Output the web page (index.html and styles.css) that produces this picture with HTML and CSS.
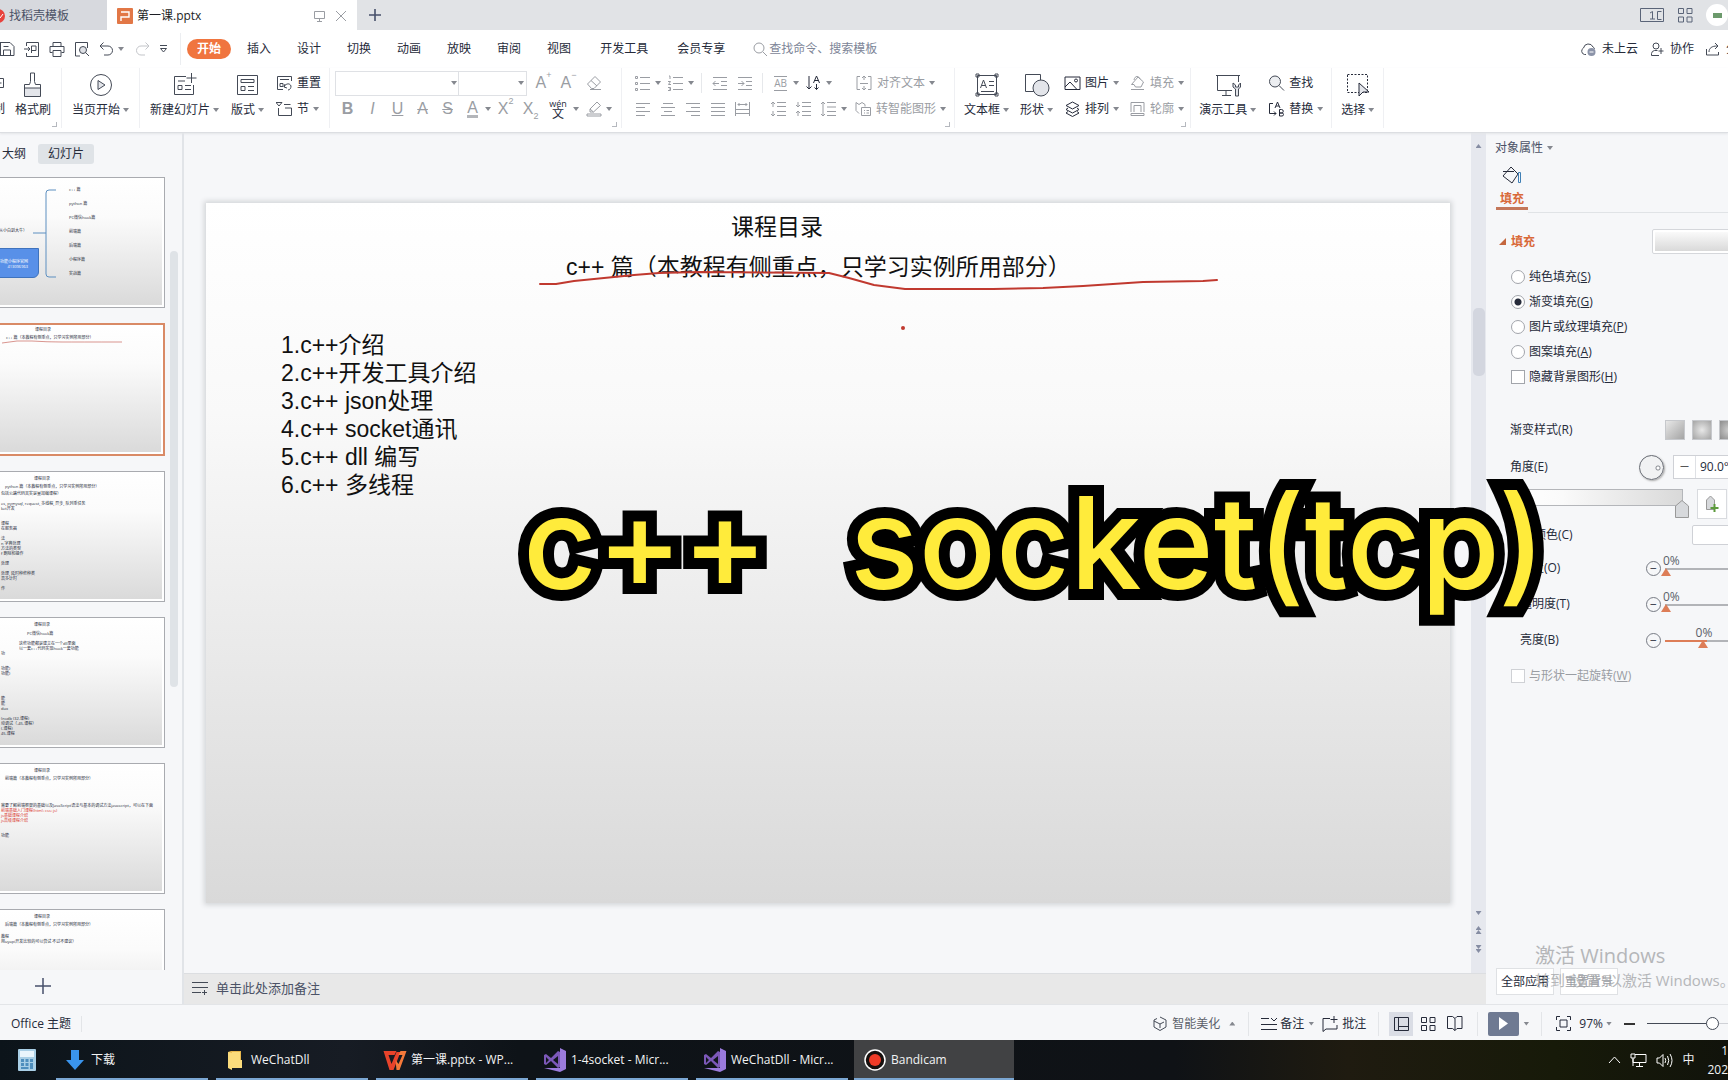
FILE: index.html
```
<!DOCTYPE html>
<html lang="zh-CN">
<head>
    <meta charset="UTF-8">
    <meta name="viewport" content="width=device-width, initial-scale=1.0">
    <title>第一课.pptx</title>
    <link rel="stylesheet" href="styles.css">
</head>
<body>
<div class="app">
    <!-- 标签栏 -->
    <header class="tab-bar">
        <div class="doc-tab first">
            <svg class="docer" width="5" height="14" viewBox="0 0 5 14"><circle cx="-2" cy="7" r="7" fill="#e8413c"/><path d="M0 9 L3 5" stroke="#fff" stroke-width="1"/></svg>
            <span>找稻壳模板</span>
        </div>
        <div class="doc-tab active">
            <svg width="16" height="16" viewBox="0 0 16 16"><rect width="16" height="16" rx="1" fill="#e27746"/><path d="M4 4h8v5H4v4" fill="none" stroke="#fff" stroke-width="1.4"/></svg>
            <span class="doc-name">第一课.pptx</span>
            <svg width="12" height="12" viewBox="0 0 12 12" class="ico gray"><path d="M.5 1.5h10v7H.5zM5.500 8.500v3M3 11.500h5"/></svg>
            <button class="plain" aria-label="关闭"><svg width="12" height="12" viewBox="0 0 12 12" class="ico gray"><path d="M1 1l10 10M11 1L1 11"/></svg></button>
        </div>
        <button class="plain new-tab" aria-label="新建"><svg width="12" height="12" viewBox="0 0 12 12"><path d="M6 0v12M0 6h12" stroke="#47506b" stroke-width="1.600"/></svg></button>
        <div class="window-tools">
            <svg width="25" height="15" viewBox="0 0 25 15" class="ico slate"><path d="M.5.5h23v13H.5zM21.500 3.500h-4v8h4M10 5l2.500-1.500V11M10 11h5"/></svg>
            <svg width="15" height="15" viewBox="0 0 15 15" class="ico slate"><path d="M.5.5h5v5h-5zM9 .5h5v5H9zM.5 9h5v5h-5zM9 9h5v5H9z"/></svg>
            <span class="avatar"><i></i></span>
        </div>
    </header>

    <!-- 菜单 -->
    <nav class="menu-bar">
        <div class="quick">
            <button class="plain" aria-label="保存"><svg width="15" height="16" viewBox="0 0 15 16" class="ico"><path d="M0 1.500h10l4 4v9H0M3.500 14.500V9h7v5.500M3.500 5.500h5M.5 2v12"/></svg></button>
            <button class="plain" aria-label="输出为PDF"><svg width="16" height="16" viewBox="0 0 16 16" class="ico"><path d="M2.500 5V1.500h12v14h-12V12M0 8h6M4 6l2 2-2 2M7.500 12V5H12v4.500H7"/></svg></button>
            <button class="plain" aria-label="打印"><svg width="16" height="16" viewBox="0 0 16 16" class="ico"><path d="M4 5V1.500h8V5M3.500 11.500H1V5.500h14v6h-2.500M4 9.500h8v6H4z"/></svg></button>
            <button class="plain" aria-label="打印预览"><svg width="16" height="16" viewBox="0 0 16 16" class="ico"><path d="M6 15H1.500V1.500h12V7"/><circle cx="9" cy="9" r="3.500" fill="#dfe1e6"/><path d="M11.500 11.500L15 15"/></svg></button>
            <button class="plain" aria-label="撤销"><svg width="14" height="16" viewBox="0 0 14 16" class="ico"><path d="M4.500 1.500L1 5l3.500 3.500M1 5h8a4 4 0 0 1 0 9H5"/></svg></button>
            <i class="caret"></i>
            <button class="plain" aria-label="恢复"><svg width="14" height="16" viewBox="0 0 14 16" class="ico light"><path d="M9.500 1.500L13 5 9.500 8.500M13 5H5a4 4 0 0 0 0 9h4"/></svg></button>
            <button class="plain" aria-label="更多"><svg width="9" height="8" viewBox="0 0 9 8" class="ico"><path d="M1 .5h7M1.500 3.500h6L4.500 7z"/></svg></button>
        </div>
        <div class="menus">
            <a href="#" class="current">开始</a>
            <a href="#">插入</a>
            <a href="#">设计</a>
            <a href="#">切换</a>
            <a href="#">动画</a>
            <a href="#">放映</a>
            <a href="#">审阅</a>
            <a href="#">视图</a>
            <a href="#" class="wide">开发工具</a>
            <a href="#" class="wide">会员专享</a>
        </div>
        <label class="search">
            <svg width="15" height="15" viewBox="0 0 15 15" class="ico gray"><circle cx="6" cy="6" r="5"/><path d="M10 10l4 4"/></svg>
            <input type="text" placeholder="查找命令、搜索模板" aria-label="查找命令">
        </label>
        <div class="cloud">
            <a href="#"><svg width="17" height="16" viewBox="0 0 17 16" class="ico"><path d="M6 13.500H4.500a3.500 3.500 0 0 1-1-6.500 5 5 0 0 1 9.500-1c1 .5 1.500 1.500 1.500 2"/><circle cx="11.500" cy="11" r="4" fill="#8b93a8" stroke="none"/><path d="M9.500 11h4" stroke="#fff"/></svg>未上云</a>
            <a href="#"><svg width="15" height="15" viewBox="0 0 15 15" class="ico"><circle cx="6" cy="4" r="3"/><path d="M9 13.500H1.500v-2a3.500 3.500 0 0 1 3-3h3M11 6v6M8.500 9h5"/></svg>协作</a>
            <a href="#" class="share"><svg width="15" height="14" viewBox="0 0 15 14" class="ico"><path d="M.5 7v6h12v-3M3 10c0-4 3-6 8-6M9 1l3 3-3 3"/></svg>分享</a>
        </div>
    </nav>

    <!-- 功能区 -->
    <section class="ribbon">
        <div class="group clip corner">
            <div class="rows cut">
                <div class="row"><svg width="5" height="14" viewBox="0 0 5 14" class="ico"><path d="M0 2.500h3.500v9H0M0 7h1.500"/></svg></div>
                <div class="row"><span>制</span></div>
            </div>
            <button class="big"><svg width="20" height="26" viewBox="0 0 20 26" class="ico"><path d="M1.500 16h16v8.500h-16z" fill="#e3e5ea"/><path d="M1.500 16v-3.500h5l1-3V1h4v8.500l1 3h5V16"/></svg><span>格式刷</span></button>
        </div>
        <div class="group play">
            <button class="big"><svg width="24" height="24" viewBox="0 0 24 24" class="ico"><circle cx="12" cy="12" r="10.500"/><path d="M9 7.500v9l7-4.500z" fill="#e3e5ea"/></svg><span>当页开始<i class="caret"></i></span></button>
        </div>
        <div class="group slides">
            <button class="big"><svg width="24" height="24" viewBox="0 0 24 24" class="ico"><path d="M13 3.500H1.500v18h19V12M18.500 0v10M13.500 5h10M5 8h7M5 12.500h4v4H5zM12 12.500h6M12 16.500h6"/></svg><span>新建幻灯片<i class="caret"></i></span></button>
            <button class="big"><svg width="24" height="24" viewBox="0 0 24 24" class="ico"><path d="M1.500 2.500h20v19h-20zM5 6.500h13v3H5zM5 13.500h4v4H5zM12 13.500h6M12 17.500h6"/></svg><span>版式<i class="caret"></i></span></button>
            <div class="rows">
                <div class="row"><button class="small"><svg width="17" height="16" viewBox="0 0 17 16" class="ico"><path d="M7 14.500H1.500v-13h14V6M4 4.500h9M4 8.500h3v3H4zM9 9l-1 3 3 1M8 12c2-4 6-4 7-1 0 2-1 4-3 4"/></svg>重置</button></div>
                <div class="row"><button class="small"><svg width="17" height="16" viewBox="0 0 17 16" class="ico"><path d="M0 1.500h6L3 5zM8 3.500h6.500M2.500 7v7.500h13V7H9"/></svg>节<i class="caret"></i></button></div>
            </div>
        </div>
        <div class="group font corner">
            <div class="rows">
                <div class="row">
                    <div class="combo"><input class="face" type="text" aria-label="字体"><i class="caret"></i><input class="size" type="text" aria-label="字号"><i class="caret"></i></div>
                    <button class="tool letter">A<sup>+</sup></button>
                    <button class="tool letter">A<sup>−</sup></button>
                    <button class="tool"><svg width="16" height="16" viewBox="0 0 16 16" class="ico gray"><path d="M1.500 9L9 1.500 14.500 7 8 13.500H5.500zM5 5.500L11 11M4 14.500h11"/></svg></button>
                </div>
                <div class="row">
                    <button class="tool letter"><b>B</b></button>
                    <button class="tool letter"><em>I</em></button>
                    <button class="tool letter"><u>U</u></button>
                    <button class="tool letter"><s>A</s></button>
                    <button class="tool letter"><s>S</s></button>
                    <button class="tool letter"><span class="bar">A</span></button><i class="caret"></i>
                    <button class="tool letter">X<sup>2</sup></button>
                    <button class="tool letter">X<sub>2</sub></button>
                    <button class="tool pinyin"><small>wén</small><span>文</span></button><i class="caret"></i>
                    <button class="tool"><svg width="16" height="16" viewBox="0 0 16 16" class="ico gray"><path d="M4 8l7-7 3.500 3.500-7 6.500H4zM4 8l3.500 3M1 13h14v2H1z"/></svg></button><i class="caret"></i>
                </div>
            </div>
        </div>
        <div class="group para corner">
            <div class="rows">
                <div class="row">
                    <button class="tool"><svg width="16" height="16" viewBox="0 0 16 16" class="ico gray"><path d="M5 2.500h10M5 8.500h10M5 14.500h10M.5 1.500h2v2h-2zM.5 7.500h2v2h-2zM.5 13.500h2v2h-2z"/></svg></button><i class="caret"></i>
                    <button class="tool"><svg width="16" height="16" viewBox="0 0 16 16" class="ico gray"><path d="M5 2.500h10M5 8.500h10M5 14.500h10M1 1h1v3M0 6.500h2.500L.5 9.500h2.500M0 12.500h2.500v3H0M1 14h1.500"/></svg></button><i class="caret"></i>
                    <i class="divider"></i>
                    <button class="tool"><svg width="16" height="16" viewBox="0 0 16 16" class="ico gray"><path d="M1 2.500h14M9 6.500h6M9 10.500h6M1 14.500h14M7 8.500H1M3.500 6L1 8.500 3.500 11"/></svg></button>
                    <button class="tool"><svg width="16" height="16" viewBox="0 0 16 16" class="ico gray"><path d="M1 2.500h14M9 6.500h6M9 10.500h6M1 14.500h14M1 8.500h6M4.500 6L7 8.500 4.500 11"/></svg></button>
                    <i class="divider"></i>
                    <button class="tool ab"><span>AB</span></button><i class="caret"></i>
                    <button class="tool"><svg width="16" height="16" viewBox="0 0 16 16" class="ico dark"><path d="M3 1v13M.5 11.500L3 14l2.500-2.500M7.500 8l3-7 3 7M8.500 5.500h4M10.500 9v5.500M8.500 12.500l2 2 2-2"/></svg></button><i class="caret"></i>
                    <button class="small off push"><svg width="17" height="16" viewBox="0 0 17 16" class="ico gray"><path d="M4 1.500H1v13h3M12 1.500h3v13h-3M8 1v4M6 3l2-2 2 2M4 8.500h8M8 11v4M6 13l2 2 2-2"/></svg>对齐文本<i class="caret"></i></button>
                </div>
                <div class="row">
                    <button class="tool"><svg width="16" height="16" viewBox="0 0 16 16" class="ico gray"><path d="M1 2.500h14M1 6.500h9M1 10.500h14M1 14.500h9"/></svg></button>
                    <button class="tool"><svg width="16" height="16" viewBox="0 0 16 16" class="ico gray"><path d="M3 2.500h10M1 6.500h14M4 10.500h8M1 14.500h14"/></svg></button>
                    <button class="tool"><svg width="16" height="16" viewBox="0 0 16 16" class="ico gray"><path d="M1 2.500h14M6 6.500h9M1 10.500h14M6 14.500h9"/></svg></button>
                    <button class="tool"><svg width="16" height="16" viewBox="0 0 16 16" class="ico gray"><path d="M1 2.500h14M1 6.500h14M1 10.500h14M1 14.500h14"/></svg></button>
                    <button class="tool"><svg width="17" height="16" viewBox="0 0 17 16" class="ico gray"><path d="M1.500 1v14M15.500 1v14M4 3.500h9M5.500 2L4 3.500 5.500 5M11.500 2L13 3.500 11.500 5M2 8.500h13M2 12.500h13"/></svg></button>
                    <button class="tool lines"><svg width="17" height="16" viewBox="0 0 17 16" class="ico gray"><path d="M7 1.500h9M7 5.500h9M7 10.500h9M7 14.500h9M3 6V1M1 3l2-2 2 2M3 10v5M1 13l2 2 2-2"/></svg></button>
                    <button class="tool"><svg width="17" height="16" viewBox="0 0 17 16" class="ico gray"><path d="M7 1.500h9M7 5.500h9M7 10.500h9M7 14.500h9M3 1v5M1 4l2 2 2-2M3 15v-5M1 12l2-2 2 2"/></svg></button>
                    <button class="tool"><svg width="17" height="16" viewBox="0 0 17 16" class="ico gray"><path d="M7 1.500h9M7 6h9M7 10.500h9M7 14.500h9M3 1v14M1 3l2-2 2 2M1 13l2 2 2-2"/></svg></button><i class="caret"></i>
                    <button class="small off smart"><svg width="17" height="16" viewBox="0 0 17 16" class="ico gray"><path d="M1 1.500l3 2 3-2 3 2v2M1 1.500v8l3 3M6.500 6.500h9v8h-9zM9 9.500h1M11.500 9.500H14M9 12h1M11.500 12H14"/></svg>转智能图形<i class="caret"></i></button>
                </div>
            </div>
        </div>
        <div class="group draw corner">
            <button class="big"><svg width="24" height="24" viewBox="0 0 24 24" class="ico"><path d="M2.500 2.500h19v19h-19zM1 1h3v3H1zM20 1h3v3h-3zM1 20h3v3H1zM20 20h3v3h-3zM5.500 15l3-8 3 8M7 12.500h3.500M14 8.500h5M14 12.500h5M6 18.500h13"/></svg><span>文本框<i class="caret"></i></span></button>
            <button class="big"><svg width="26" height="24" viewBox="0 0 26 24" class="ico"><path d="M1.500 1.500h15v17h-15z"/><circle cx="17" cy="15" r="8" fill="#e3e5ea"/></svg><span>形状<i class="caret"></i></span></button>
            <div class="rows">
                <div class="row"><button class="small"><svg width="17" height="16" viewBox="0 0 17 16" class="ico dark"><path d="M1 2h15v12.500H1zM1 12l5-5 7 7.500"/><circle cx="12" cy="5.500" r="1.500"/></svg>图片<i class="caret"></i></button></div>
                <div class="row"><button class="small"><svg width="17" height="16" viewBox="0 0 17 16" class="ico dark"><path d="M8.500 1L15 4.500 8.500 8 2 4.500zM4 7L2 8.500 8.500 12 15 8.500 13 7M4 10.500l-2 1.500 6.500 3.500L15 12l-2-1.500"/></svg>排列<i class="caret"></i></button></div>
            </div>
            <div class="rows">
                <div class="row"><button class="small off"><svg width="16" height="16" viewBox="0 0 16 16" class="ico gray"><path d="M4 9.500H1.500L8 2l5.500 5-2.500 5H5.500zM4 5C5 0 9 1 10 4M1 14.500h13"/></svg>填充<i class="caret"></i></button></div>
                <div class="row"><button class="small off"><svg width="16" height="16" viewBox="0 0 16 16" class="ico gray"><path d="M1 11V1.500h13V11M4 11V4.500h7V11M1 12.500h13v2H1z"/></svg>轮廓<i class="caret"></i></button></div>
            </div>
        </div>
        <div class="group tools">
            <button class="big"><svg width="26" height="24" viewBox="0 0 26 24" class="ico"><path d="M1 2.500h24M2.500 2.500v15H17M23.500 2.500V9M11 17.500V22M7 22.500h9"/><path d="M18 10v4l2.500 2v7h3v-7l2-2v-4l-2 2v2h-3v-2z" fill="#e3e5ea"/></svg><span>演示工具<i class="caret"></i></span></button>
            <div class="rows">
                <div class="row"><button class="small"><svg width="17" height="16" viewBox="0 0 17 16" class="ico"><circle cx="7" cy="6.500" r="5.500" fill="#eceef1"/><path d="M11 10.500l5 5"/></svg>查找</button></div>
                <div class="row"><button class="small"><svg width="17" height="16" viewBox="0 0 17 16" class="ico dark"><path d="M5 2.500H1.500v10H8M6 10.500l2 2-2 2M7 7l2.500-6L12 7M8 5h3M11.500 8.500v6.500h2.500a1.500 1.500 0 0 0 0-3h-2.500 2a1.500 1.500 0 0 0 0-3.500z"/></svg>替换<i class="caret"></i></button></div>
            </div>
        </div>
        <div class="group select">
            <button class="big"><svg width="24" height="24" viewBox="0 0 24 24" class="ico dark"><path d="M1.500 1.500h20v18h-20z" stroke-dasharray="2 1.500"/><path d="M13 10v13l4-4h6z" fill="#e3e5ea"/></svg><span>选择<i class="caret"></i></span></button>
        </div>
    </section>

    <main class="work">
        <!-- 缩略图 -->
        <aside class="outline">
            <div class="outline-tabs"><button class="plain">大纲</button><button class="plain on">幻灯片</button></div>
            <div class="thumbs">
                <div class="thumb map">
                    <svg class="brace" width="100" height="126" viewBox="0 0 100 126"><path d="M32 10h-7q-3 0-3 3v81q0 3 3 3h7M22 53H9" fill="none" stroke="#5c8fc0"/></svg>
                    <p class="from">从小白到大牛）</p>
                    <p class="site">多功能小程序官网<br>413096963</p>
                    <ul><li>c++ 篇</li><li>python 篇</li><li>PC微信hook篇</li><li>前端篇</li><li>后端篇</li><li>小程序篇</li><li>实战篇</li></ul>
                </div>
                <div class="thumb selected">
                    <h4>课程目录</h4>
                    <h5>c++ 篇（本教程有侧重点，只学习实例所用部分）</h5>
                    <svg class="mini-ink" width="124" height="6" viewBox="0 0 124 6"><path d="M0 4q15-3 30-2t30 1 60 0" fill="none" stroke="#c9675f" stroke-width=".7"/></svg>
                </div>
                <div class="thumb">
                    <h4>课程目录</h4>
                    <h5>python 篇（本教程有侧重点，只学习实例所用部分）</h5>
                    <pre>包括公路代码其实是量加编课程）

es, pymysql, request, 多线程, 异步, 队列重任务
ket开发


课程
在服务器

法
n 字典处理
方法的类型
f 删除和操作

处理

处理, 延时种些种类
高多计时

作</pre>
                </div>
                <div class="thumb">
                    <h4>课程目录</h4>
                    <h5 class="mid">PC微信hook篇</h5>
                    <h6>这些功能都是建立在一个dll里面<br>以一套c++代码实现hook一套功能</h6>
                    <pre>
功


功能)
功能)




能
能
dux

(nodb (32-课程)
动调试（-45-课程）
(-课程)
45-课程</pre>
                </div>
                <div class="thumb">
                    <h4>课程目录</h4>
                    <h5>前端篇（本教程有侧重点，只学习实例所用部分）</h5>
                    <pre>




需要了解前端框架的基础以及JavaScript语法与基本的调试方法javascript，可以在下面
<span class="red">前端基础入门课程(html+css+js)
js基础课程介绍
js高级课程介绍</span>


功能</pre>
                </div>
                <div class="thumb">
                    <h4>课程目录</h4>
                    <h5>后端篇（本教程有侧重点，只学习实例所用部分）</h5>
                    <pre>

教程
用uyapi开发比较的可以尝试 不过不建议）</pre>
                </div>
            </div>
            <i class="thumb-scroll"></i>
            <button class="plain add-slide" aria-label="新建幻灯片"><svg width="16" height="16" viewBox="0 0 16 16"><path d="M8 0v16M0 8h16" stroke="#47506b" stroke-width="1.500"/></svg></button>
        </aside>

        <!-- 编辑区 -->
        <section class="editor">
            <div class="stage">
                <div class="canvas">
                    <article class="slide">
                        <h1>课程目录</h1>
                        <h2>c++ 篇（本教程有侧重点，只学习实例所用部分）</h2>
                        <ol>
                            <li>1.c++介绍</li>
                            <li>2.c++开发工具介绍</li>
                            <li>3.c++ json处理</li>
                            <li>4.c++ socket通讯</li>
                            <li>5.c++ dll 编写</li>
                            <li>6.c++ 多线程</li>
                        </ol>
                        <svg class="ink" width="690" height="70" viewBox="0 0 690 70"><path d="M5 14h16l18-3 30-3 30-3 25-2 40-1 130 1 20 5 25 7 31 4h88l50-1 40-2 60-4 60-1 14-1" fill="none" stroke="#c0392f" stroke-width="2" stroke-linecap="round" stroke-linejoin="round"/><circle cx="368" cy="58" r="2" fill="#c0392f"/></svg>
                    </article>
                </div>
                <div class="v-scroll">
                    <i class="up"></i>
                    <i class="grip"></i>
                    <i class="down"></i>
                    <span class="pair"><i class="up"></i><i class="up"></i></span>
                    <span class="pair"><i class="down"></i><i class="down"></i></span>
                </div>
            </div>
            <div class="notes">
                <svg width="17" height="14" viewBox="0 0 17 14" class="ico"><path d="M0 1.500h16M0 6.500h16M0 11.500h9M12.500 9v5M10 11.500h5"/></svg>
                <span>单击此处添加备注</span>
            </div>
        </section>

        <!-- 对象属性 -->
        <aside class="props">
            <h3>对象属性<i class="caret"></i></h3>
            <div class="prop-tab">
                <svg width="20" height="20" viewBox="0 0 20 20" class="ico dark"><path d="M1 11L9 2l7 7-6 9zM1 6.500h11"/><path d="M16.500 7.500h2v10h-2z" stroke="#3f7fb5"/></svg>
                <b>填充</b>
            </div>
            <div class="section-title"><i></i><b>填充</b><span class="fill-preview"><i></i></span></div>
            <div class="choices">
                <label><input type="radio" name="fill">纯色填充(<u>S</u>)</label>
                <label><input type="radio" name="fill" checked>渐变填充(<u>G</u>)</label>
                <label><input type="radio" name="fill">图片或纹理填充(<u>P</u>)</label>
                <label><input type="radio" name="fill">图案填充(<u>A</u>)</label>
                <label><input type="checkbox">隐藏背景图形(<u>H</u>)</label>
            </div>
            <div class="field styles"><span>渐变样式(R)</span><div class="swatches"><button class="linear" aria-label="线性"></button><button class="radial" aria-label="射线"></button><button class="rect" aria-label="矩形"></button></div></div>
            <div class="field angle"><label for="angle">角度(E)</label><span class="dial"></span><div class="spin"><button aria-label="减小">━</button><input id="angle" type="text" value="90.0°"></div></div>
            <div class="stops"><div class="ramp"></div><svg class="stop" width="14" height="18" viewBox="0 0 14 18"><path d="M.5 17.500V6L7 .5 13.500 6v11.500z" fill="#d7d9dc" stroke="#999"/></svg><button aria-label="添加色标"><svg width="14" height="18" viewBox="0 0 14 18"><path d="M1.500 14.500V5L5.500 1l4 4v9.500z" fill="#d7d9dc" stroke="#999"/><path d="M9.500 9v8M5.500 13h8" stroke="#5c9a3c" stroke-width="2"/></svg></button></div>
            <div class="field color"><label for="color">色标颜色(C)</label><select id="color"></select></div>
            <div class="field slide-field"><label for="pos">位置(O)</label><button class="minus" aria-label="减小">−</button><div class="slider"><output>0%</output><input id="pos" type="range" value="0"></div></div>
            <div class="field slide-field"><label for="alpha">透明度(T)</label><button class="minus" aria-label="减小">−</button><div class="slider"><output>0%</output><input id="alpha" type="range" value="0"></div></div>
            <div class="field slide-field"><label for="light">亮度(B)</label><button class="minus" aria-label="减小">−</button><div class="slider half"><output>0%</output><input id="light" type="range" min="-100" max="100" value="0"></div></div>
            <div class="choices rotate"><label class="off"><input type="checkbox" disabled>与形状一起旋转(<u>W</u>)</label></div>
            <div class="apply"><button>全部应用</button><button class="off">重置背景</button></div>
            <div class="watermark"><p>激活 Windows</p><small>转到"设置"以激活 Windows。</small></div>
        </aside>
    </main>

    <!-- 状态栏 -->
    <footer class="status">
        <span class="theme">Office 主题</span>
        <div class="status-tools">
            <button class="plain beautify"><svg width="14" height="15" viewBox="0 0 14 15" class="ico"><path d="M7 1l6 3v7l-6 3.500L1 11V4l3-1.500M1 5l6 3 4-2M7 8v4"/></svg>智能美化<i class="caret top"></i></button>
            <button class="plain note"><svg width="17" height="14" viewBox="0 0 17 14" class="ico dark"><path d="M0 1.500h8M0 7.500h16M0 12.500h16M10 1l3 3 3-3"/></svg>备注<i class="caret"></i></button>
            <button class="plain comment"><svg width="16" height="16" viewBox="0 0 16 16" class="ico dark"><path d="M8 2.500H1v13l3-2.500h11V9M12 0v7M8.500 3.500h7"/></svg>批注</button>
            <div class="views">
                <button class="plain on" aria-label="普通"><svg width="15" height="14" viewBox="0 0 15 14" class="ico dark"><path d="M.5.5h14v13H.5zM4.500.5v13M4.500 9.500h10"/></svg></button>
                <button class="plain" aria-label="浏览"><svg width="15" height="14" viewBox="0 0 15 14" class="ico dark"><path d="M.5.5h5v5h-5zM9 .5h5v5H9zM.5 8.500h5v5h-5zM9 8.500h5v5H9z"/></svg></button>
                <button class="plain" aria-label="阅读"><svg width="16" height="15" viewBox="0 0 16 15" class="ico dark"><path d="M.5.5h5L8 2.500l2-2h5v12h-5l-2 2-2.500-2h-5zM8 2.500v12"/></svg></button>
            </div>
            <div class="show"><button aria-label="放映"><svg width="11" height="13" viewBox="0 0 11 13"><path d="M1 0v13l9-6.500z" fill="#fff"/></svg></button><i class="caret"></i></div>
            <div class="zoom">
                <svg width="15" height="15" viewBox="0 0 15 15" class="ico dark"><path d="M.5 4V.5H4M11 .5h3.500V4M14.500 11v3.500H11M4 14.500H.5V11M4 4h7v7H4z"/></svg>
                <span>97%</span><i class="caret"></i>
                <button class="plain" aria-label="缩小"><svg width="11" height="4" viewBox="0 0 11 4"><path d="M0 2h11" stroke="#333" stroke-width="2"/></svg></button>
                <input type="range" value="50" aria-label="缩放">
            </div>
        </div>
    </footer>

    <!-- 任务栏 -->
    <footer class="taskbar">
        <button class="calc" aria-label="计算器"><svg width="18" height="22" viewBox="0 0 18 22"><rect width="18" height="22" rx="1" fill="#a9cfe6"/><rect x="2" y="2" width="14" height="6" fill="#e9f5fc"/><path d="M3 10h3v3H3zM7.500 10h3v3h-3zM12 10h3v3h-3zM3 14h3v3H3zM7.500 14h3v3h-3zM12 14h3v6h-3zM3 18h7.500v2H3z" fill="#4f8fbd"/></svg></button>
        <button class="task"><svg width="18" height="20" viewBox="0 0 18 20"><path d="M5 0h8v10h5l-9 10-9-10h5z" fill="#3a94ec"/></svg><span>下载</span></button>
        <button class="task"><svg width="16" height="20" viewBox="0 0 16 20"><path d="M1 2l3-1h10v17H5z" fill="#e9b94e"/><path d="M1 2l4 1v17l-4-2zM5 2h8v8h2v8H5z" fill="#fbdc7c"/></svg><span>WeChatDll</span></button>
        <button class="task"><svg width="23" height="19" viewBox="0 0 23 19"><path d="M0 0h13l-2 4H5l3 9 5-12h4l-7 18H6z" fill="#e8432b"/><path d="M12 9l3 4 4-9h-4l2-4h6l-7 19h-3z" fill="#f5793a"/></svg><span>第一课.pptx - WP...</span></button>
        <button class="task"><svg width="24" height="24" viewBox="0 0 24 24"><path d="M1 7l2-1 5 4 7-7 2 1v15l-2 1-7-7-5 4-2-1z" fill="#7c58b8"/><path d="M3 9v6l3-3zM15 8l-5 4 5 4z" fill="#11161c"/><path d="M17 0l6 3v18l-6 3-16-4h16z" fill="#9b7bdc"/></svg><span>1-4socket - Micr...</span></button>
        <button class="task"><svg width="24" height="24" viewBox="0 0 24 24"><path d="M1 7l2-1 5 4 7-7 2 1v15l-2 1-7-7-5 4-2-1z" fill="#7c58b8"/><path d="M3 9v6l3-3zM15 8l-5 4 5 4z" fill="#11161c"/><path d="M17 0l6 3v18l-6 3-16-4h16z" fill="#9b7bdc"/></svg><span>WeChatDll - Micr...</span></button>
        <button class="task front"><svg width="22" height="22" viewBox="0 0 22 22"><circle cx="11" cy="11" r="10" fill="#16110f" stroke="#fff" stroke-width="1.500"/><circle cx="11" cy="11" r="6" fill="#ee3b27"/></svg><span>Bandicam</span></button>
        <div class="tray">
            <svg width="13" height="8" viewBox="0 0 13 8"><path d="M1 7l5.500-6L12 7"/></svg>
            <svg width="17" height="15" viewBox="0 0 17 15"><path d="M5 1.500h11v8H3V6M9.500 9.500v4M6 13.500h7M1 1h4v4H1zM3 5v8"/></svg>
            <svg width="17" height="15" viewBox="0 0 17 15"><path d="M1 5v5h2.500L7 13.500v-12L3.500 5zM9 5q1.500 2.500 0 5M11.500 3q2.500 4.500 0 9M14 1q4 6.500 0 13"/></svg>
            <span>中</span>
            <time>1<br>202</time>
        </div>
    </footer>

    <p class="caption"><span>c++</span><span>socket(tcp)</span></p>
</div>
</body>
</html>
```
FILE: styles.css
```
* {
    box-sizing: border-box;
}
body {
    margin: 0;
    font-family: "Open Sans", "Noto Sans CJK SC", sans-serif;
    font-size: 12px;
    line-height: 16px;
    color: #262b3a;
    overflow: hidden;
}
h1, h2, h3, h4, h5, h6, p, ul, ol, pre {
    margin: 0;
    padding: 0;
    font-weight: normal;
    list-style: none;
}
button, input, select {
    font: inherit;
    color: inherit;
    margin: 0;
    padding: 0;
    border: 0;
    background: none;
    border-radius: 0;
}
a {
    color: inherit;
    text-decoration: none;
}
svg {
    display: block;
    flex: none;
}
.app {
    position: relative;
    display: flex;
    flex-direction: column;
    height: 100vh;
    overflow: hidden;
    background: #f6f7f9;
    white-space: nowrap;
}
.plain {
    display: flex;
    align-items: center;
}
.ico {
    fill: none;
    stroke: #444a56;
    stroke-width: 1;
}
.ico.gray { stroke: #9a9da3; }
.ico.light { stroke: #c3c5c9; }
.ico.dark { stroke: #262b3a; }
.ico.slate { stroke: #5a6478; }
.caret {
    flex: none;
    width: 6px;
    height: 4px;
    background: #85888f;
    clip-path: polygon(0 0, 100% 0, 50% 100%);
}
.caret.top {
    clip-path: polygon(0 100%, 100% 100%, 50% 0);
}

/* 标签栏 */
.tab-bar {
    display: flex;
    flex: none;
    height: 30px;
    background: #e1e3e6;
}
.doc-tab {
    display: flex;
    align-items: center;
    gap: 4px;
    width: 107px;
    padding-top: 2px;
    background: #d7d9de;
    color: #4b5266;
}
.doc-tab.active {
    width: 250px;
    padding: 2px 10px 0;
    background: #fff;
    color: #1c1e24;
}
.doc-name {
    flex: 1;
}
.doc-tab.active .ico {
    margin-left: 5px;
}
.new-tab {
    margin-left: 12px;
}
.window-tools {
    display: flex;
    align-items: center;
    gap: 13px;
    margin-left: auto;
}
.avatar {
    display: flex;
    align-items: center;
    justify-content: center;
    width: 22px;
    height: 22px;
    border-radius: 50%;
    background: #fff;
}
.avatar i {
    width: 9px;
    height: 5px;
    background: #6c9a6c;
}

/* 菜单 */
.menu-bar {
    display: flex;
    flex: none;
    align-items: center;
    height: 38px;
    background: #fff;
}
.quick {
    display: flex;
    align-items: center;
    gap: 9px;
    width: 181px;
    height: 32px;
    border-right: 1px solid #eceef1;
}
.quick .caret {
    margin: 0 3px 0 -4px;
}
.menus {
    display: flex;
    align-items: center;
    gap: 26px;
    margin-left: 6px;
}
.menus .current {
    padding: 2px 10px;
    margin-right: -10px;
    border-radius: 10px;
    background: #f0753f;
    color: #fff;
    font-weight: bold;
}
.menus .wide {
    margin-left: 3px;
}
.search {
    display: flex;
    align-items: center;
    gap: 1px;
    margin-left: 28px;
}
.search input {
    width: 120px;
}
.search input::placeholder {
    color: #7d8597;
    opacity: 1;
}
.cloud {
    display: flex;
    gap: 12px;
    margin-left: auto;
}
.cloud a {
    display: flex;
    align-items: center;
    gap: 5px;
}
.cloud .share {
    width: 22px;
    overflow: hidden;
}

/* 功能区 */
.ribbon {
    display: flex;
    flex: none;
    height: 65px;
    background: #fff;
    border-bottom: 1px solid #dcdee2;
    box-shadow: 0 1px 2px #e3e5e8;
    z-index: 1;
}
.group {
    display: flex;
    position: relative;
    height: 60px;
    border-right: 1px solid #eff0f3;
}
.group.corner::after {
    content: "";
    position: absolute;
    right: 4px;
    bottom: 1px;
    width: 4px;
    height: 4px;
    border: solid #b5b8be;
    border-width: 0 1px 1px 0;
}
.group.clip { width: 62px; }
.group.clip .big { margin-left: 10px; }
.group.play { padding: 0 10px; }
.group.slides { gap: 12px; padding: 0 8px 0 10px; }
.group.font { padding-left: 5px; width: 292px; }
.group.para { padding-left: 8px; width: 333px; }
.group.draw { gap: 11px; padding: 0 6px 0 9px; }
.group.tools { gap: 12px; padding: 0 8px; }
.group.select { padding: 0 9px; }
.big {
    display: flex;
    flex-direction: column;
    align-items: center;
    gap: 4px;
    padding-top: 4px;
}
.big svg {
    height: 26px;
}
.big span, .small {
    display: flex;
    align-items: center;
}
.big .caret {
    margin-left: 3px;
}
.rows {
    display: flex;
    flex-direction: column;
    padding-top: 2px;
}
.rows.cut {
    width: 5px;
    overflow: hidden;
}
.cut .row {
    justify-content: flex-end;
}
.row {
    display: flex;
    align-items: center;
    height: 26px;
}
.row > .caret {
    margin-right: 2px;
}
.small {
    gap: 4px;
}
.off {
    color: #9a9da3;
}
.combo {
    display: flex;
    align-items: center;
    height: 25px;
    width: 192px;
    margin-right: 4px;
    border: 1px solid #dfe1e5;
}
.combo .face {
    width: 115px;
}
.combo .size {
    width: 60px;
    height: 23px;
    margin-left: 1px;
    border-left: 1px solid #dfe1e5;
}
.tool {
    display: flex;
    flex: none;
    align-items: center;
    justify-content: center;
    width: 25px;
    height: 24px;
}
.letter {
    color: #9a9da3;
    font-family: "Liberation Sans", sans-serif;
    font-size: 16px;
}
.letter sup, .letter sub {
    font-size: 9px;
    line-height: 9px;
}
.letter sup {
    align-self: flex-start;
}
.letter sub {
    align-self: flex-end;
}
.letter .bar {
    line-height: 14px;
    border-bottom: 3px solid #b4b6ba;
}
.pinyin {
    flex-direction: column;
    width: 30px;
}
.pinyin span {
    line-height: 12px;
}
.pinyin small {
    font-size: 9px;
    line-height: 9px;
}
.divider {
    width: 1px;
    height: 20px;
    margin: 0 5px;
    background: #e6e8eb;
}
.ab span {
    border: solid #9a9da3;
    border-width: 1px 0;
    line-height: 13px;
    color: #9a9da3;
    font-size: 10px;
}
.push {
    margin-left: 22px;
}
.lines {
    margin-left: 11px;
}
.smart {
    margin-left: 6px;
}

/* 主体 */
.work {
    display: flex;
    flex: 1;
    min-height: 0;
}
.outline {
    display: flex;
    position: relative;
    flex-direction: column;
    flex: none;
    width: 184px;
    border-right: 2px solid #e1e4e8;
}
.outline-tabs {
    display: flex;
    align-items: center;
    gap: 12px;
    padding: 11px 0 13px 2px;
}
.outline-tabs .on {
    padding: 2px 10px;
    border-radius: 3px;
    background: #dfe3e7;
}
.thumbs {
    display: flex;
    flex: 1;
    flex-direction: column;
    align-items: flex-end;
    gap: 15px;
    min-height: 0;
    padding-right: 17px;
    overflow: hidden;
}
.thumb {
    position: relative;
    flex: none;
    width: 229px;
    height: 131px;
    padding: 4px 0 0 64px;
    border: 1px solid #a9abb0;
    background: linear-gradient(#fff, #fbfbfb 30%, #d9d9d9);
    box-shadow: inset 0 0 0 2px #fff;
    font-size: 4px;
    line-height: 5px;
    overflow: hidden;
}
.thumb.selected {
    height: 133px;
    padding-top: 2px;
    border: 2px solid #d98a66;
}
.thumb h4 {
    font-size: 4px;
    padding-left: 33px;
}
.thumb h5 {
    padding: 3px 0 2px 4px;
    font-size: 4px;
}
.thumb h5.mid {
    padding: 4px 0 5px 26px;
}
.thumb h6 {
    padding-left: 18px;
    font-size: 4px;
}
.thumb pre {
    font-family: inherit;
}
.red {
    color: #d8352c;
}
.map p, .map ul, .map svg {
    position: absolute;
}
.map ul {
    left: 132px;
    top: 5px;
    line-height: 14px;
}
.map .from {
    left: 62px;
    top: 50px;
}
.map .brace {
    left: 87px;
    top: 2px;
}
.map .site {
    left: 40px;
    top: 70px;
    width: 62px;
    height: 30px;
    padding: 10px 10px 0 0;
    border-radius: 0 0 6px 0;
    border: 1px solid #3f73bd;
    background: #5890e8;
    color: #fff;
    text-align: right;
}
.mini-ink {
    margin-top: -3px;
}
.thumb-scroll {
    position: absolute;
    right: 4px;
    top: 118px;
    width: 8px;
    height: 50%;
    border-radius: 4px;
    background: #dfe3e7;
}
.add-slide {
    padding: 8px 35px 10px;
}

.editor {
    display: flex;
    flex: 1;
    flex-direction: column;
    min-width: 0;
}
.stage {
    display: flex;
    flex: 1;
}
.canvas {
    display: flex;
    flex: 1;
    padding: 70px 21px 70px 22px;
}
.slide {
    position: relative;
    flex: 1;
    padding-top: 10px;
    background: linear-gradient(#fff, #f9f9f9 30%, #d9d9d9);
    box-shadow: 0 0 5px 2px #d3d5d8;
    font-family: "Liberation Sans", "Noto Sans CJK SC", sans-serif;
    font-size: 23px;
    line-height: 28px;
    color: #111;
}
.slide h1 {
    padding-left: 525px;
    font-size: 23px;
}
.slide h2 {
    padding: 12px 0 50px 360px;
    font-size: 23px;
}
.slide ol {
    padding-left: 75px;
}
.ink {
    position: absolute;
    left: 329px;
    top: 67px;
}
.v-scroll {
    display: flex;
    flex-direction: column;
    align-items: center;
    gap: 11px;
    width: 15px;
    padding: 11px 0 20px;
    background: #e6e8ee;
}
.up, .down {
    width: 6px;
    height: 4px;
    background: #868da3;
    clip-path: polygon(0 100%, 100% 100%, 50% 0);
}
.down {
    clip-path: polygon(0 0, 100% 0, 50% 100%);
}
.grip {
    width: 12px;
    height: 68px;
    margin: 149px 0 auto;
    border-radius: 5px;
    background: #d3d6df;
}
.pair {
    display: flex;
    flex-direction: column;
}
.notes {
    display: flex;
    align-items: center;
    gap: 7px;
    height: 31px;
    padding: 0 0 2px 8px;
    border-top: 1px solid #dcdee1;
    background: #e8e8e8;
    font-size: 13px;
    color: #4b5266;
}

/* 对象属性 */
.props {
    display: flex;
    position: relative;
    flex-direction: column;
    flex: none;
    width: 242px;
    overflow: hidden;
}
.props h3 {
    display: flex;
    align-items: center;
    gap: 4px;
    padding: 7px 9px;
    font-size: 12px;
    color: #4b5266;
}
.prop-tab {
    display: flex;
    flex-direction: column;
    align-items: center;
    gap: 6px;
    width: 32px;
    margin-left: 10px;
    padding-top: 2px;
    border-bottom: 3px solid #c4775a;
    color: #d9693a;
}
.prop-tab::after {
    content: "";
    position: absolute;
    top: 79px;
    left: 42px;
    right: 0;
    height: 1px;
    background: #e0e3e6;
}
.section-title {
    display: flex;
    align-items: center;
    gap: 5px;
    padding: 19px 0 0 13px;
    color: #d9693a;
}
.section-title > i {
    flex: none;
    width: 7px;
    height: 7px;
    background: #c4673f;
    clip-path: polygon(100% 0, 100% 100%, 0 100%);
}
.fill-preview {
    flex: none;
    width: 80px;
    height: 25px;
    margin-left: 112px;
    padding: 2px;
    border: 1px solid #d5d7db;
    border-radius: 2px;
    background: #fff;
}
.fill-preview i {
    display: block;
    height: 19px;
    background: linear-gradient(#fafafa, #d9d9d9);
}
.choices {
    padding: 10px 0 0 25px;
}
.choices label {
    display: flex;
    align-items: center;
    height: 25px;
}
.choices input {
    appearance: none;
    width: 14px;
    height: 14px;
    margin-right: 4px;
    border: 1px solid #a2a5ab;
    background: #fff;
}
.choices input[type="radio"] {
    border-radius: 50%;
}
.choices input:checked {
    background: radial-gradient(circle, #262b3a 3px, #fff 4px);
}
.choices input:disabled {
    border-color: #cfd1d5;
}
.field {
    display: flex;
    align-items: center;
    height: 36px;
    padding-left: 24px;
}
.field > label, .field > span:first-child {
    flex: none;
    width: 129px;
}
.field.styles {
    height: 38px;
    margin-top: 22px;
}
.swatches {
    display: flex;
    gap: 7px;
    margin-left: 26px;
}
.swatches button {
    width: 20px;
    height: 20px;
    border: 1px solid #c6c8cc;
}
.swatches .linear { background: linear-gradient(135deg, #e8e8e8, #a4a4a4); }
.swatches .radial { background: radial-gradient(#e8e8e8, #a4a4a4); }
.swatches .rect { background: radial-gradient(#d0d0d0, #8c8c8c); }
.dial {
    flex: none;
    width: 25px;
    height: 25px;
    border: 1px solid #666a72;
    border-radius: 50%;
    background: radial-gradient(circle at 18px 12px, #fff 1px, #8b8e94 2px, #f1f2f3 3px);
    box-shadow: 1px 1px 2px #aaa;
}
.spin {
    display: flex;
    flex: none;
    width: 80px;
    height: 24px;
    margin-left: 9px;
    border: 1px solid #cfd1d6;
    background: #fff;
}
.spin button {
    width: 23px;
    border-right: 1px solid #dfe1e5;
    font-size: 8px;
    color: #555;
}
.spin input {
    width: 56px;
    padding-left: 4px;
}
.stops {
    display: flex;
    align-items: flex-start;
    padding: 4px 0 0 24px;
}
.ramp {
    width: 173px;
    height: 17px;
    border: 1px solid #b4b6ba;
    background: linear-gradient(90deg, #fff, #fafafa 30%, #d9d9d9);
}
.stop {
    margin: 11px 0 0 -8px;
}
.stops button {
    display: flex;
    align-items: center;
    justify-content: center;
    width: 30px;
    height: 30px;
    margin-left: 8px;
    border: 1px solid #d9dbdf;
    background: #fff;
}
.field.color {
    height: 32px;
}
.color select {
    appearance: none;
    flex: none;
    width: 80px;
    height: 20px;
    margin-left: 53px;
    border: 1px solid #cfd1d6;
    border-radius: 2px;
    background: #fff;
}
.slide-field {
    padding: 0 0 2px 34px;
}
.slide-field > label {
    width: 126px;
}
.minus {
    flex: none;
    width: 15px;
    height: 15px;
    border: 1px solid #777b84;
    border-radius: 50%;
    line-height: 11px;
}
.slider {
    display: flex;
    flex: none;
    flex-direction: column;
    width: 84px;
    padding-bottom: 2px;
    color: #5b5f69;
}
.slider output {
    padding-left: 2px;
    line-height: 14px;
}
.slider.half output {
    text-align: center;
}
.slider input {
    appearance: none;
    height: 12px;
    background: linear-gradient(#b2b4b8, #b2b4b8) 4px 0 / 100% 2px no-repeat;
}
.slider.half input {
    background: linear-gradient(90deg, #dd7d57 50%, #b2b4b8 50%) 4px 0 / 100% 2px no-repeat;
}
.slider input::-webkit-slider-thumb {
    appearance: none;
    width: 10px;
    height: 8px;
    margin-top: -4px;
    background: #dd7d57;
    clip-path: polygon(50% 0, 100% 100%, 0 100%);
}
.choices.rotate {
    padding-top: 4px;
}
.apply {
    display: flex;
    gap: 6px;
    margin-top: auto;
    padding: 0 10px 9px;
}
.apply button {
    width: 58px;
    height: 27px;
    border: 1px solid #dfe1e4;
    background: #fff;
}
.watermark {
    position: absolute;
    left: 49px;
    bottom: 14px;
    color: #a5a7aa;
    opacity: .8;
}
.watermark p {
    font-size: 20px;
    line-height: 28px;
}
.watermark small {
    display: block;
    font-size: 15px;
    line-height: 20px;
}

/* 状态栏 */
.status {
    display: flex;
    flex: none;
    align-items: center;
    height: 36px;
    padding-top: 2px;
    border-top: 1px solid #e3e5e8;
    background: #f6f7f9;
}
.theme {
    padding: 0 10px 0 11px;
    border-right: 1px solid #e3e5e8;
    font-size: 12px;
}
.status-tools {
    display: flex;
    align-items: center;
    margin-left: auto;
}
.status-tools > * {
    display: flex;
    align-items: center;
    height: 24px;
}
.status .beautify {
    gap: 5px;
    padding-right: 13px;
    border-right: 1px solid #e3e5e8;
    color: #5b5f69;
}
.beautify .caret {
    margin-left: 4px;
}
.note {
    gap: 2px;
    margin-left: 12px;
}
.note .caret {
    margin-left: 2px;
}
.status .comment {
    gap: 4px;
    margin-left: 8px;
    padding-right: 12px;
    border-right: 1px solid #e3e5e8;
}
.views {
    gap: 3px;
    padding: 0 10px;
    border-right: 1px solid #e3e5e8;
}
.views button {
    justify-content: center;
    width: 24px;
    height: 24px;
}
.views .on {
    background: #dadde5;
}
.show {
    gap: 4px;
    padding: 0 12px 0 10px;
    border-right: 1px solid #e3e5e8;
}
.show button {
    display: flex;
    align-items: center;
    justify-content: center;
    width: 31px;
    height: 24px;
    border-radius: 2px;
    background: #6f7a92;
}
.zoom {
    gap: 8px;
    padding-left: 14px;
}
.zoom .caret {
    margin: 0 4px 0 -5px;
}
.zoom input {
    appearance: none;
    width: 81px;
    height: 16px;
    margin: 0 0 0 4px;
    background: linear-gradient(90deg, #444a56 75%, #cfd1d6 75%) 0 50% / 100% 1px no-repeat;
}
.zoom input::-webkit-slider-thumb {
    appearance: none;
    width: 13px;
    height: 13px;
    margin-left: 25px;
    border: 1px solid #444a56;
    border-radius: 50%;
    background: #fff;
}

/* 任务栏 */
.taskbar {
    display: flex;
    flex: none;
    gap: 8px;
    height: 40px;
    background: linear-gradient(90deg, #0c141a, #171c24 20%, #0e1318 30%, #0f1216 68%, #1f1b10 78%, #171a09 90%, #11130b);
    color: #f2f3f4;
}
.calc {
    width: 48px;
    padding: 0 0 0 18px;
}
.task {
    display: flex;
    align-items: center;
    gap: 4px;
    width: 152px;
    padding: 2px 0 0 7px;
    border-bottom: 2px solid #7ba7d3;
}
.task svg {
    width: 24px;
}
.task.front {
    width: 160px;
    margin-left: -2px;
    padding-left: 9px;
    background: #414244;
}
.tray {
    display: flex;
    align-items: center;
    gap: 9px;
    margin-left: auto;
}
.tray svg {
    fill: none;
    stroke: #fff;
}
.tray time {
    margin-left: 4px;
    line-height: 19px;
    text-align: right;
}

/* 视频字幕 */
.caption {
    display: flex;
    gap: 82px;
    position: absolute;
    left: 523px;
    top: 459px;
    font-family: Inter, "Liberation Sans", sans-serif;
    font-size: 128px;
    font-weight: 500;
    line-height: 168px;
    color: #ffeb3b;
    -webkit-text-stroke: 22px #000;
    paint-order: stroke fill;
}
```
